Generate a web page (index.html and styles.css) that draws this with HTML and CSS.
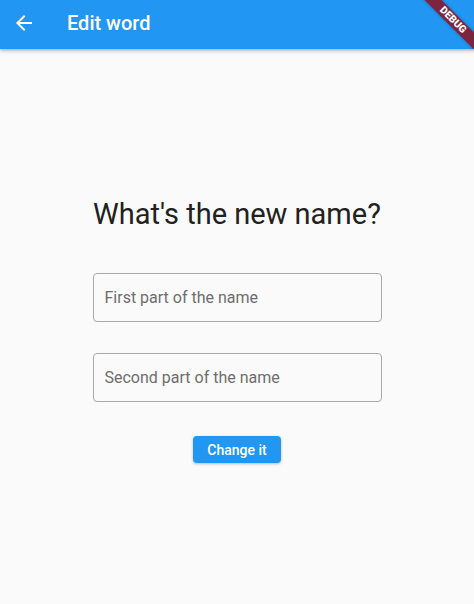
FILE: index.html
```html
<!DOCTYPE html>
<html>
<head>
<meta charset="utf-8">
<link rel="stylesheet" href="styles.css">
</head>
<body>
<div class="app">
  <header class="appbar">
    <button class="back" aria-label="Back">
      <svg viewBox="0 0 24 24" width="24" height="24"><path fill="#fff" d="M20 11H7.83l5.59-5.59L12 4l-8 8 8 8 1.41-1.41L7.83 13H20v-2z"/></svg>
    </button>
    <h1 class="title">Edit word</h1>
  </header>
  <main class="content">
    <h2 class="heading">What's the new name?</h2>
    <div class="field"><input type="text" placeholder="First part of the name"></div>
    <div class="field second"><input type="text" placeholder="Second part of the name"></div>
    <button class="submit">Change it</button>
  </main>
  <div class="banner">DEBUG</div>
</div>
</body>
</html>
```
FILE: styles.css
```css
* { box-sizing: border-box; }
html, body { margin: 0; padding: 0; height: 100%; }
body {
  background: #fafafa;
  font-family: Roboto, "Noto Sans", sans-serif;
  overflow: hidden;
}
.app {
  position: relative;
  width: 474px;
  height: 604px;
  display: flex;
  flex-direction: column;
  overflow: hidden;
}
.appbar {
  height: 49px;
  flex: 0 0 49px;
  background: #2196f3;
  display: flex;
  align-items: center;
  padding-left: 12px;
  box-shadow: 0 2px 4px rgba(0,0,0,0.2), 0 1px 2px rgba(0,0,0,0.14);
  position: relative;
  z-index: 1;
}
.back {
  width: 24px;
  height: 24px;
  padding: 0;
  border: 0;
  background: none;
  display: flex;
  margin-top: -3px;
}
.title {
  margin: 0 0 0 31px;
  color: #fff;
  font-size: 20px;
  font-weight: 500;
  margin-top: -3px;
}
.content {
  flex: 1;
  display: flex;
  flex-direction: column;
  align-items: center;
  justify-content: center;
  padding-top: 7px;
}
.heading {
  margin: 0 0 42px;
  font-size: 29px;
  font-weight: 400;
  color: #212121;
  line-height: 34px;
}
.field {
  width: 289px;
  height: 49px;
  border: 1px solid #a8a8a8;
  border-radius: 4px;
  display: flex;
  align-items: center;
}
.field.second { margin-top: 31px; }
.field input {
  width: 100%;
  border: 0;
  background: transparent;
  outline: none;
  font-family: Roboto, sans-serif;
  font-size: 16px;
  padding: 0 11px;
  color: #212121;
}
.field input::placeholder { color: #6e6e6e; }
.submit {
  margin-top: 34px;
  width: 88px;
  height: 27px;
  border: 0;
  border-radius: 4px;
  background: #2196f3;
  color: #fff;
  font-family: Roboto, sans-serif;
  font-size: 14px;
  font-weight: 500;
  box-shadow: 0 1px 3px rgba(0,0,0,0.25);
  padding: 0;
}
.banner {
  position: absolute;
  left: 413px;
  top: 14px;
  width: 80px;
  height: 12px;
  transform: rotate(45deg);
  background: #7d2440;
  color: #fff;
  font-size: 10.2px;
  font-weight: 900;
  line-height: 12px;
  text-align: center;
  letter-spacing: 0;
  z-index: 2;
  box-shadow: 0 0 3px rgba(0,0,0,0.3);
}
```
